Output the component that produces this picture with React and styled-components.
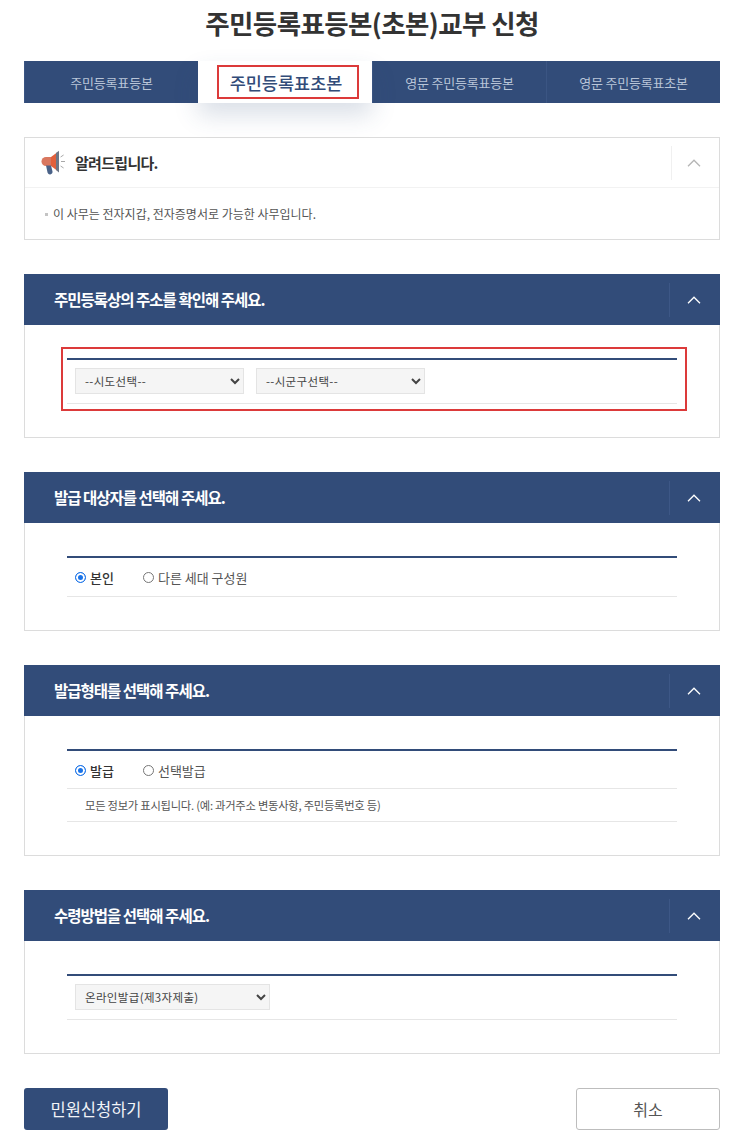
import React from 'react';
import styled, { createGlobalStyle } from 'styled-components';

const NAVY = '#324c79';
const TABS = ['주민등록표등본', '주민등록표초본', '영문 주민등록표등본', '영문 주민등록표초본'];

const Chevron = ({ color }) => (
  <svg width="14" height="8" viewBox="0 0 14 8" fill="none">
    <path d="M1 7.2 7 1.2l6 6" stroke={color} strokeWidth="1.3" />
  </svg>
);

const Megaphone = () => (
  <svg width="27" height="25" viewBox="0 0 27 25">
    <path d="M5 7h5v9H5a4.5 4.5 0 0 1 0-9z" fill="#d9775f" />
    <path d="M10 7l6-4.5v18L10 16z" fill="#e2603c" />
    <path d="M15 3 18 .8v21.6L15 20z" fill="#6d7686" />
    <path d="M5 15.5h5l1.6 6.5a2.6 2.6 0 0 1-5 .8z" fill="#4a6288" />
    <path d="M20 11.5h4M19.6 7l3-2M19.6 16l3 2" stroke="#a8a8a8" strokeWidth="1" />
  </svg>
);

const Section = ({ title, children }) => (
  <Card>
    <NavyHead>
      <HeadTitle>{title}</HeadTitle>
      <Toggle $dark><Chevron color="#ffffff" /></Toggle>
    </NavyHead>
    <Body>{children}</Body>
  </Card>
);

const Radio = ({ label, checked }) => (
  <RadioLabel $checked={checked}>
    <RadioDot $checked={checked} />
    {label}
  </RadioLabel>
);

const App = () => (
  <Page>
    <GlobalStyle />
    <Title>주민등록표등본(초본)교부 신청</Title>
    <TabBar>
      {TABS.map((t, i) => (
        <Tab key={t} $active={i === 1}>
          {i === 1 ? <ActiveMark>{t}</ActiveMark> : t}
        </Tab>
      ))}
    </TabBar>

    <NoticeCard>
      <NoticeHead>
        <NoticeTitle><Megaphone />알려드립니다.</NoticeTitle>
        <NoticeToggle><Chevron color="#b5b5b5" /></NoticeToggle>
      </NoticeHead>
      <NoticeBody>
        <Bullet />이 사무는 전자지갑, 전자증명서로 가능한 사무입니다.
      </NoticeBody>
    </NoticeCard>

    <Section title="주민등록상의 주소를 확인해 주세요.">
      <Marked>
        <Table>
          <SelectRow>
            <Select $w={169} defaultValue="a"><option value="a">--시도선택--</option></Select>
            <Select $w={169} defaultValue="b"><option value="b">--시군구선택--</option></Select>
          </SelectRow>
        </Table>
      </Marked>
    </Section>

    <Section title="발급 대상자를 선택해 주세요.">
      <Table>
        <Row $h={39}>
          <Radio label="본인" checked />
          <Radio label="다른 세대 구성원" />
        </Row>
      </Table>
    </Section>

    <Section title="발급형태를 선택해 주세요.">
      <Table>
        <Row>
          <Radio label="발급" checked />
          <Radio label="선택발급" />
        </Row>
        <NoteRow>모든 정보가 표시됩니다. (예: 과거주소 변동사항, 주민등록번호 등)</NoteRow>
      </Table>
    </Section>

    <Section title="수령방법을 선택해 주세요.">
      <Table>
        <SelectRow>
          <Select $w={195} defaultValue="c"><option value="c">온라인발급(제3자제출)</option></Select>
        </SelectRow>
      </Table>
    </Section>

    <Actions>
      <PrimaryButton type="button">민원신청하기</PrimaryButton>
      <CancelButton type="button">취소</CancelButton>
    </Actions>
  </Page>
);

const GlobalStyle = createGlobalStyle`
  html, body { margin: 0; background: #fff; }
  body { font-family: "Noto Sans CJK KR", "Noto Sans", sans-serif; color: #333; }
  * { box-sizing: border-box; }
`;

const Page = styled.div`
  width: 740px;
  height: 1140px;
  padding: 0 20px 0 24px;
  overflow: hidden;
  display: flex;
  flex-direction: column;
`;

const Title = styled.h1`
  margin: 0;
  height: 61px;
  padding-top: 3px;
  font-size: 26.5px;
  line-height: 40px;
  font-weight: 700;
  letter-spacing: -0.6px;
  text-align: center;
  color: #333;
`;

const TabBar = styled.div`
  display: grid;
  grid-template-columns: repeat(4, 1fr);
  height: 42px;
  background: ${NAVY};
`;

const Tab = styled.div`
  display: flex;
  align-items: center;
  justify-content: center;
  font-size: 13px;
  letter-spacing: -0.2px;
  color: ${p => (p.$active ? '#324c79' : '#b9c5d8')};
  background: ${p => (p.$active ? '#fff' : 'transparent')};
  box-shadow: ${p => (p.$active ? '0 12px 24px rgba(50, 76, 121, 0.18)' : 'none')};
  border-left: ${p => (p.$active ? '0' : '1px solid #3b5583')};
  position: relative;
  z-index: ${p => (p.$active ? 1 : 0)};
`;

const ActiveMark = styled.span`
  width: 142px;
  height: 34px;
  margin-left: 6px;
  padding-right: 4px;
  display: flex;
  align-items: center;
  justify-content: center;
  border: 2px solid #dc3a3a;
  font-size: 17.5px;
  font-weight: 500;
  letter-spacing: 0;
  color: #324c79;
`;

const Card = styled.section`
  border: 1px solid #dcdcdc;
  border-top: 0;
  margin-bottom: 34px;
`;

const NoticeCard = styled.section`
  margin: 34px 0 34px;
  height: 103px;
  border: 1px solid #dcdcdc;
`;

const NoticeHead = styled.div`
  height: 50px;
  display: flex;
  align-items: center;
  justify-content: space-between;
  padding-left: 16px;
  border-bottom: 1px solid #f2f2f2;
`;

const NoticeTitle = styled.h2`
  margin: 0;
  display: flex;
  align-items: center;
  gap: 7px;
  font-size: 15px;
  font-weight: 700;
  letter-spacing: -0.7px;
  color: #333;
`;

const NoticeBody = styled.p`
  margin: 0;
  padding: 17px 20px 15px;
  display: flex;
  align-items: center;
  font-size: 12px;
  line-height: 18px;
  color: #555;
`;

const Bullet = styled.i`
  width: 3px;
  height: 3px;
  margin-right: 5px;
  background: #c4c4c4;
`;

const NavyHead = styled.div`
  height: 51px;
  margin: 0 -1px;
  display: flex;
  align-items: center;
  justify-content: space-between;
  padding-left: 30px;
  background: ${NAVY};
`;

const HeadTitle = styled.h2`
  margin: 0 0 2px;
  font-size: 15.5px;
  font-weight: 700;
  letter-spacing: -1px;
  color: #fff;
`;

const Toggle = styled.span`
  width: 51px;
  height: 34px;
  padding-right: 2px;
  display: flex;
  align-items: center;
  justify-content: center;
  border-left: 1px solid #3d5786;
`;

const NoticeToggle = styled(Toggle)`
  width: 48px;
  padding-right: 4px;
  border-left-color: #f0f0f0;
`;

const Body = styled.div`
  padding: 33px 42px 33px;
`;

const Marked = styled.div`
  position: relative;

  &::after {
    content: '';
    position: absolute;
    inset: -11px -10px -7px -6px;
    border: 2px solid #dc3a3a;
    pointer-events: none;
  }
`;

const Table = styled.div`
  border-top: 2px solid ${NAVY};
`;

const Row = styled.div`
  height: ${p => p.$h || 38}px;
  display: flex;
  align-items: center;
  gap: 12px;
  padding-left: 8px;
  padding-top: 1px;
  border-bottom: 1px solid #e6e6e6;
`;

const SelectRow = styled(Row)`
  height: 44px;
  padding-top: 0;
  padding-bottom: 2px;
`;

const NoteRow = styled.div`
  height: 33px;
  display: flex;
  align-items: center;
  padding-left: 18px;
  font-size: 11.3px;
  letter-spacing: -0.25px;
  color: #555;
  border-bottom: 1px solid #e6e6e6;
`;

const Select = styled.select`
  width: ${p => p.$w}px;
  height: 26px;
  padding: 0 4px 0 5px;
  border: 1px solid #e4e4e4;
  border-radius: 0;
  background: #f5f5f5;
  font-family: inherit;
  font-size: 11.5px;
  letter-spacing: 0.35px;
  color: #444;
`;

const RadioLabel = styled.label`
  display: flex;
  align-items: center;
  gap: 4px;
  margin-right: 17px;
  font-size: 13px;
  font-weight: ${p => (p.$checked ? 500 : 400)};
  color: ${p => (p.$checked ? '#333' : '#555')};
`;

const RadioDot = styled.span`
  width: 11px;
  height: 11px;
  border-radius: 50%;
  border: 1px solid ${p => (p.$checked ? '#1a73e8' : '#767676')};
  background: ${p => (p.$checked ? '#1a73e8' : '#fff')};
  box-shadow: ${p => (p.$checked ? 'inset 0 0 0 2px #fff' : 'none')};
`;

const Actions = styled.div`
  display: flex;
  justify-content: space-between;
`;

const PrimaryButton = styled.button`
  width: 144px;
  height: 42px;
  border: 0;
  border-radius: 3px;
  background: ${NAVY};
  font-family: inherit;
  font-size: 16.5px;
  color: #f2f4f8;
`;

const CancelButton = styled.button`
  width: 144px;
  height: 42px;
  border: 1px solid #bdbdbd;
  border-radius: 3px;
  background: #fff;
  font-family: inherit;
  font-size: 16px;
  color: #555;
`;

export default App;
